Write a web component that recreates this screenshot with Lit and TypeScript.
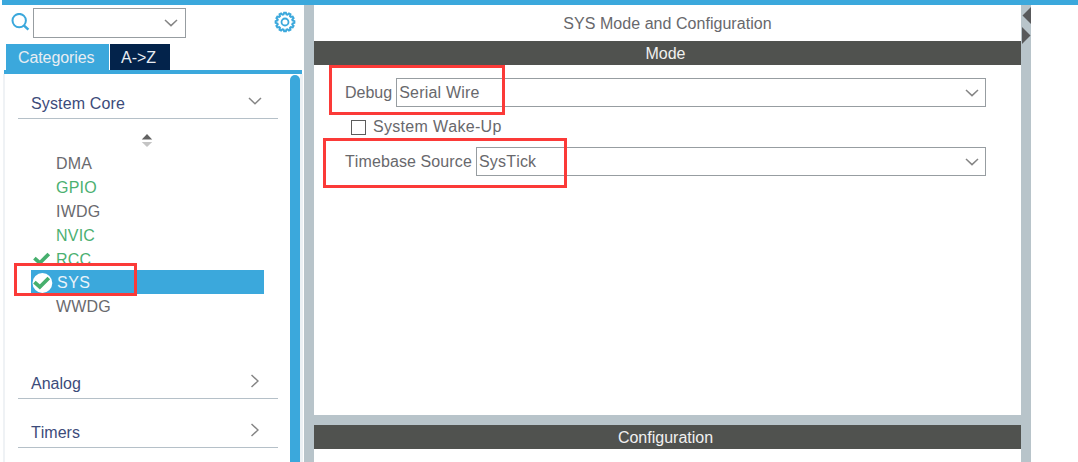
import { LitElement, html, css, svg, nothing } from 'lit';
import { customElement, property } from 'lit/decorators.js';
import { classMap } from 'lit/directives/class-map.js';

type Status = 'idle' | 'available' | 'configured';

interface Peripheral {
  name: string;
  status: Status;
  selected?: boolean;
}

const PERIPHERALS: Peripheral[] = [
  { name: 'DMA', status: 'idle' },
  { name: 'GPIO', status: 'available' },
  { name: 'IWDG', status: 'idle' },
  { name: 'NVIC', status: 'available' },
  { name: 'RCC', status: 'configured' },
  { name: 'SYS', status: 'configured', selected: true },
  { name: 'WWDG', status: 'idle' },
];

/** Combo box with a thin chevron at its right end. */
@customElement('mx-select')
export class MxSelect extends LitElement {
  @property() declare value: string;

  constructor() {
    super();
    this.value = '';
  }

  static styles = css`
    :host {
      display: flex;
      align-items: center;
      justify-content: space-between;
      box-sizing: border-box;
      border: 1px solid #979da1;
      background: #fff;
      padding: 0 6px 0 2px;
    }

    .value {
      letter-spacing: 0.2px;
    }

    svg {
      display: block;
      width: 14px;
      height: 8px;
      fill: none;
      stroke: #858585;
      stroke-width: 1.5;
    }
  `;

  render() {
    return html`
      <span class="value">${this.value}</span>
      <svg viewBox="0 0 14 8"><path d="M1 1 L7 6.6 L13 1" /></svg>
    `;
  }
}

/** Left column: search, tabs and the category tree. */
@customElement('mx-sidebar')
export class MxSidebar extends LitElement {
  static styles = css`
    :host {
      display: flex;
      flex-direction: column;
      width: 302px;
      height: 457px;
    }

    .search {
      display: flex;
      align-items: flex-start;
      height: 39px;
      padding: 3px 0 0 8px;
      box-sizing: border-box;
    }

    .search mx-select {
      width: 153px;
      height: 30px;
      padding-right: 7px;
    }

    .lens {
      width: 19px;
      height: 19px;
      margin: 5px 3px 0 1px;
      fill: none;
      stroke: #3ba8dc;
      stroke-width: 2;
    }

    .gear {
      width: 22px;
      height: 22px;
      margin: 3px 0 0 88px;
      fill: none;
      stroke: #3ba8dc;
    }

    .tabs {
      display: flex;
      gap: 1px;
      height: 26px;
      margin: 0 2px;
      padding-left: 2px;
      border-bottom: 4px solid #3ba8dc;
    }

    .tab {
      box-sizing: border-box;
      height: 26px;
      padding: 0 12px;
      line-height: 27px;
      background: #03234b;
      color: #e8edf2;
    }

    .tab.active {
      width: 103px;
      background: #3ba8dc;
      letter-spacing: -0.1px;
    }

    .tab.letters {
      width: 60px;
      padding-left: 11px;
    }

    .body {
      display: flex;
      flex: 1;
      min-height: 0;
      border-left: 2px solid #eff2f5;
      border-right: 3px solid #edf1f4;
      margin: 0 1px 0 1px;
    }

    .tree {
      flex: 1;
      padding-left: 13px;
      overflow: hidden;
    }

    .section {
      display: flex;
      justify-content: space-between;
      align-items: center;
      box-sizing: border-box;
      width: 260px;
      height: 49px;
      padding: 19px 16px 0 13px;
      border-bottom: 1px solid #b5c0c8;
      color: #3c4b7a;
    }

    .section.first {
      height: 45px;
      padding-top: 15px;
      letter-spacing: 0.15px;
    }

    .section svg {
      fill: none;
      stroke: #858585;
      stroke-width: 1.5;
    }

    .down {
      width: 14px;
      height: 8px;
      margin-bottom: 6px;
    }

    .right {
      width: 8px;
      height: 14px;
      margin: 0 3px 5px 0;
    }

    .list {
      height: 231px;
      box-sizing: border-box;
      padding: 14px 0 0 13px;
    }

    .sorter {
      display: block;
      width: 12px;
      height: 14px;
      margin: 0 0 4.4px 110px;
    }

    .row {
      display: grid;
      grid-template-columns: 22px 1fr;
      align-items: center;
      column-gap: 4px;
      width: 233px;
      height: 23.8px;
      color: #6a6a6e;
    }

    .row svg {
      display: block;
      width: 22px;
      height: 22px;
      fill: none;
      stroke: #46af6d;
      stroke-width: 3.8;
    }

    .name {
      grid-column: 2;
      line-height: 24px;
      padding-top: 1px;
      letter-spacing: 0.2px;
    }

    .green {
      color: #4bb071;
    }

    .row:not(.selected) .name {
      margin-left: -1px;
    }

    .selected {
      background: #3ba8dc;
      color: #e9f3f9;
    }

    .selected .name {
      letter-spacing: 0.5px;
    }

    .scrollbar {
      width: 10px;
      margin-top: 1px;
      border-radius: 5px 5px 0 0;
      background: #3ba8dc;
    }
  `;

  private gearPath() {
    const teeth = 12;
    const points: string[] = [];
    for (let i = 0; i < teeth; i++) {
      const at = (offset: number, r: number) => {
        const a = ((i + offset) / teeth) * Math.PI * 2 - Math.PI / 2;
        return `${(11 + Math.cos(a) * r).toFixed(2)},${(11 + Math.sin(a) * r).toFixed(2)}`;
      };
      points.push(at(-0.18, 9.4), at(0.18, 9.4), at(0.36, 7.7), at(0.64, 7.7));
    }
    return `M${points.join(' L')} Z`;
  }

  private renderRow(item: Peripheral) {
    const classes = {
      row: true,
      green: item.status !== 'idle' && !item.selected,
      selected: !!item.selected,
    };
    return html`
      <div class=${classMap(classes)}>
        ${item.status === 'configured'
          ? html`<svg viewBox="0 0 22 22">
              ${item.selected
                ? svg`<circle cx="11.4" cy="11" r="9.9" fill="#fff" stroke="none" />`
                : nothing}
              <path d="M3.4 10.2 L8.8 15 L17.8 6" />
            </svg>`
          : nothing}
        <span class="name">${item.name}</span>
      </div>
    `;
  }

  private renderClosed(label: string) {
    return html`
      <div class="section">
        <span>${label}</span>
        <svg class="right" viewBox="0 0 8 14"><path d="M0.5 1 L7 7 L0.5 13" /></svg>
      </div>
    `;
  }

  render() {
    return html`
      <div class="search">
        <svg class="lens" viewBox="0 0 19 19">
          <circle cx="8.2" cy="7.6" r="6.7" />
          <path stroke-width="2.6" d="M12.8 12.4 L17.4 16.6" />
        </svg>
        <mx-select></mx-select>
        <svg class="gear" viewBox="0 0 22 22">
          <path stroke-width="2" d=${this.gearPath()} />
          <circle stroke-width="1.8" cx="11" cy="11" r="3.5" />
        </svg>
      </div>
      <div class="tabs">
        <div class="tab active">Categories</div>
        <div class="tab letters">A-&gt;Z</div>
      </div>
      <div class="body">
        <div class="tree">
          <div class="section first">
            <span>System Core</span>
            <svg class="down" viewBox="0 0 14 8"><path d="M1 1 L7 6.8 L13 1" /></svg>
          </div>
          <div class="list">
            <svg class="sorter" viewBox="0 0 12 14">
              <path fill="#626262" d="M0.8 6.4 L6 1 L11.2 6.4 Z" />
              <path fill="#c4c4c4" d="M0.8 9 L11.2 9 L6 14 Z" />
            </svg>
            ${PERIPHERALS.map((p) => this.renderRow(p))}
          </div>
          ${this.renderClosed('Analog')} ${this.renderClosed('Timers')}
        </div>
        <div class="scrollbar"></div>
      </div>
    `;
  }
}

@customElement('app-root')
export class AppRoot extends LitElement {
  static styles = css`
    :host {
      display: block;
      position: relative;
      width: 1078px;
      height: 462px;
      overflow: hidden;
      background: #fff;
      color: #68686c;
      font: 16px 'Liberation Sans', Arial, sans-serif;
      font-kerning: none;
    }

    .topbar {
      height: 5px;
      margin-left: 2px;
      background: #3ba8dc;
    }

    .columns {
      display: flex;
      height: 457px;
      padding-left: 2px;
    }

    .splitter {
      width: 10px;
      background: #b8c4ca;
    }

    .main {
      display: flex;
      flex-direction: column;
      width: 707px;
    }

    .title {
      height: 36px;
      line-height: 37px;
      text-align: center;
      letter-spacing: 0.04px;
    }

    .bar {
      box-sizing: border-box;
      height: 24px;
      padding-right: 4px;
      line-height: 25px;
      background: #50524f;
      color: #f0f0f0;
      text-align: center;
    }

    .form {
      height: 350px;
      box-sizing: border-box;
      padding: 13px 35px 0 31px;
    }

    .field {
      display: flex;
      align-items: center;
      gap: 4px;
      height: 29px;
    }

    .field mx-select {
      flex: 1;
      height: 29px;
    }

    .wide {
      letter-spacing: 0.1px;
    }

    .check {
      display: flex;
      align-items: center;
      gap: 7px;
      height: 40px;
      padding-left: 6px;
      letter-spacing: 0.3px;
    }

    .box {
      box-sizing: border-box;
      width: 15px;
      height: 15px;
      border: 1px solid #5c5c5c;
    }

    .divider {
      height: 10px;
      background: #b8c4ca;
    }

    .arrows {
      display: block;
      width: 10px;
      height: 40px;
      fill: #58595b;
    }

    /* Callouts drawn over the panels */
    .mark {
      position: absolute;
      box-sizing: border-box;
      border: 3px solid #fb3a38;
    }

    .mark-debug {
      left: 329px;
      top: 65px;
      width: 176px;
      height: 50px;
    }

    .mark-timebase {
      left: 323px;
      top: 138px;
      width: 244px;
      height: 50px;
    }

    .mark-sys {
      left: 14px;
      top: 263px;
      width: 123px;
      height: 33px;
    }
  `;

  render() {
    return html`
      <div class="topbar"></div>
      <div class="columns">
        <mx-sidebar></mx-sidebar>
        <div class="splitter"></div>
        <div class="main">
          <div class="title">SYS Mode and Configuration</div>
          <div class="bar">Mode</div>
          <div class="form">
            <div class="field">
              <span>Debug</span>
              <mx-select value="Serial Wire"></mx-select>
            </div>
            <div class="check">
              <span class="box"></span>
              <span>System Wake-Up</span>
            </div>
            <div class="field">
              <span class="wide">Timebase Source</span>
              <mx-select value="SysTick"></mx-select>
            </div>
          </div>
          <div class="divider"></div>
          <div class="bar">Configuration</div>
        </div>
        <div class="splitter">
          <svg class="arrows" viewBox="0 0 10 40">
            <path d="M10 2 L10 19 L1.5 10.5 Z" />
            <path d="M1 22 L1 39 L9.5 30.5 Z" />
          </svg>
        </div>
      </div>
      <div class="mark mark-debug"></div>
      <div class="mark mark-timebase"></div>
      <div class="mark mark-sys"></div>
    `;
  }
}
